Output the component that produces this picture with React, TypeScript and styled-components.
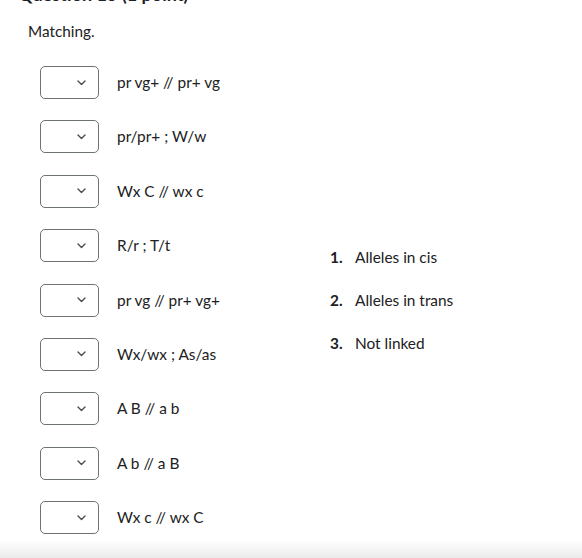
import React from 'react'
import styled, { createGlobalStyle } from 'styled-components'

const GlobalStyle = createGlobalStyle`
  html, body {
    margin: 0;
    padding: 0;
    background: #ffffff;
  }
  body {
    font-family: Lato, "Liberation Sans", sans-serif;
    color: #202122;
    overflow: hidden;
  }
`

const Page = styled.div`
  height: 558px;
  display: flex;
  flex-direction: column;
  overflow: hidden;
`

const QuestionTitle = styled.h2`
  margin: -15px 0 0 18px;
  font-size: 18px;
  line-height: 18px;
  font-weight: 700;
  color: #202122;
`

const Prompt = styled.p`
  margin: 17px 0 0 28px;
  font-size: 15.3px;
  line-height: 22px;
`

const Matching = styled.div`
  display: flex;
  align-items: center;
  margin: 24px 0 0 40px;
`

const Choices = styled.div`
  display: flex;
  flex-direction: column;
  gap: 21.4px;
  width: 290px;
`

const Row = styled.div`
  display: flex;
  align-items: center;
  gap: 18px;
`

const Select = styled.div`
  box-sizing: border-box;
  width: 59px;
  height: 33px;
  border: 1px solid #6e7376;
  border-radius: 5px;
  background: #fff;
  display: flex;
  align-items: center;
  justify-content: flex-end;
  padding-right: 12px;
  svg {
    width: 9px;
    height: 6px;
  }
`

const Label = styled.span`
  font-size: 15.4px;
  line-height: 20px;
  margin-top: -1px;
`

const Answers = styled.ol`
  list-style: none;
  margin: 0;
  padding: 0;
  display: flex;
  flex-direction: column;
  gap: 21px;
`

const Answer = styled.li`
  display: flex;
  font-size: 15.4px;
  line-height: 22px;
`

const Num = styled.span`
  font-weight: 700;
  width: 25px;
`

const Fade = styled.div`
  margin-top: auto;
  height: 18px;
  background: linear-gradient(to bottom, #ffffff, #ebebeb);
`

const Chevron = () => (
  <svg viewBox="0 0 9 6" fill="none">
    <polyline
      points="1,1 4.5,4.5 8,1"
      stroke="#494c4e"
      strokeWidth="1.4"
      strokeLinecap="round"
      strokeLinejoin="round"
    />
  </svg>
)

const premises = [
  'pr vg+ // pr+ vg',
  'pr/pr+ ; W/w',
  'Wx C // wx c',
  'R/r ; T/t',
  'pr vg // pr+ vg+',
  'Wx/wx ; As/as',
  'A B // a b',
  'A b // a B',
  'Wx c // wx C',
]

const answers = ['Alleles in cis', 'Alleles in trans', 'Not linked']

const App = () => (
  <>
    <GlobalStyle />
    <Page>
      <QuestionTitle>Question 15 (1 point)</QuestionTitle>
      <Prompt>Matching.</Prompt>
      <Matching>
        <Choices>
          {premises.map((p) => (
            <Row key={p}>
              <Select>
                <Chevron />
              </Select>
              <Label>{p}</Label>
            </Row>
          ))}
        </Choices>
        <Answers>
          {answers.map((a, i) => (
            <Answer key={a}>
              <Num>{i + 1}.</Num>
              {a}
            </Answer>
          ))}
        </Answers>
      </Matching>
      <Fade />
    </Page>
  </>
)

export default App
